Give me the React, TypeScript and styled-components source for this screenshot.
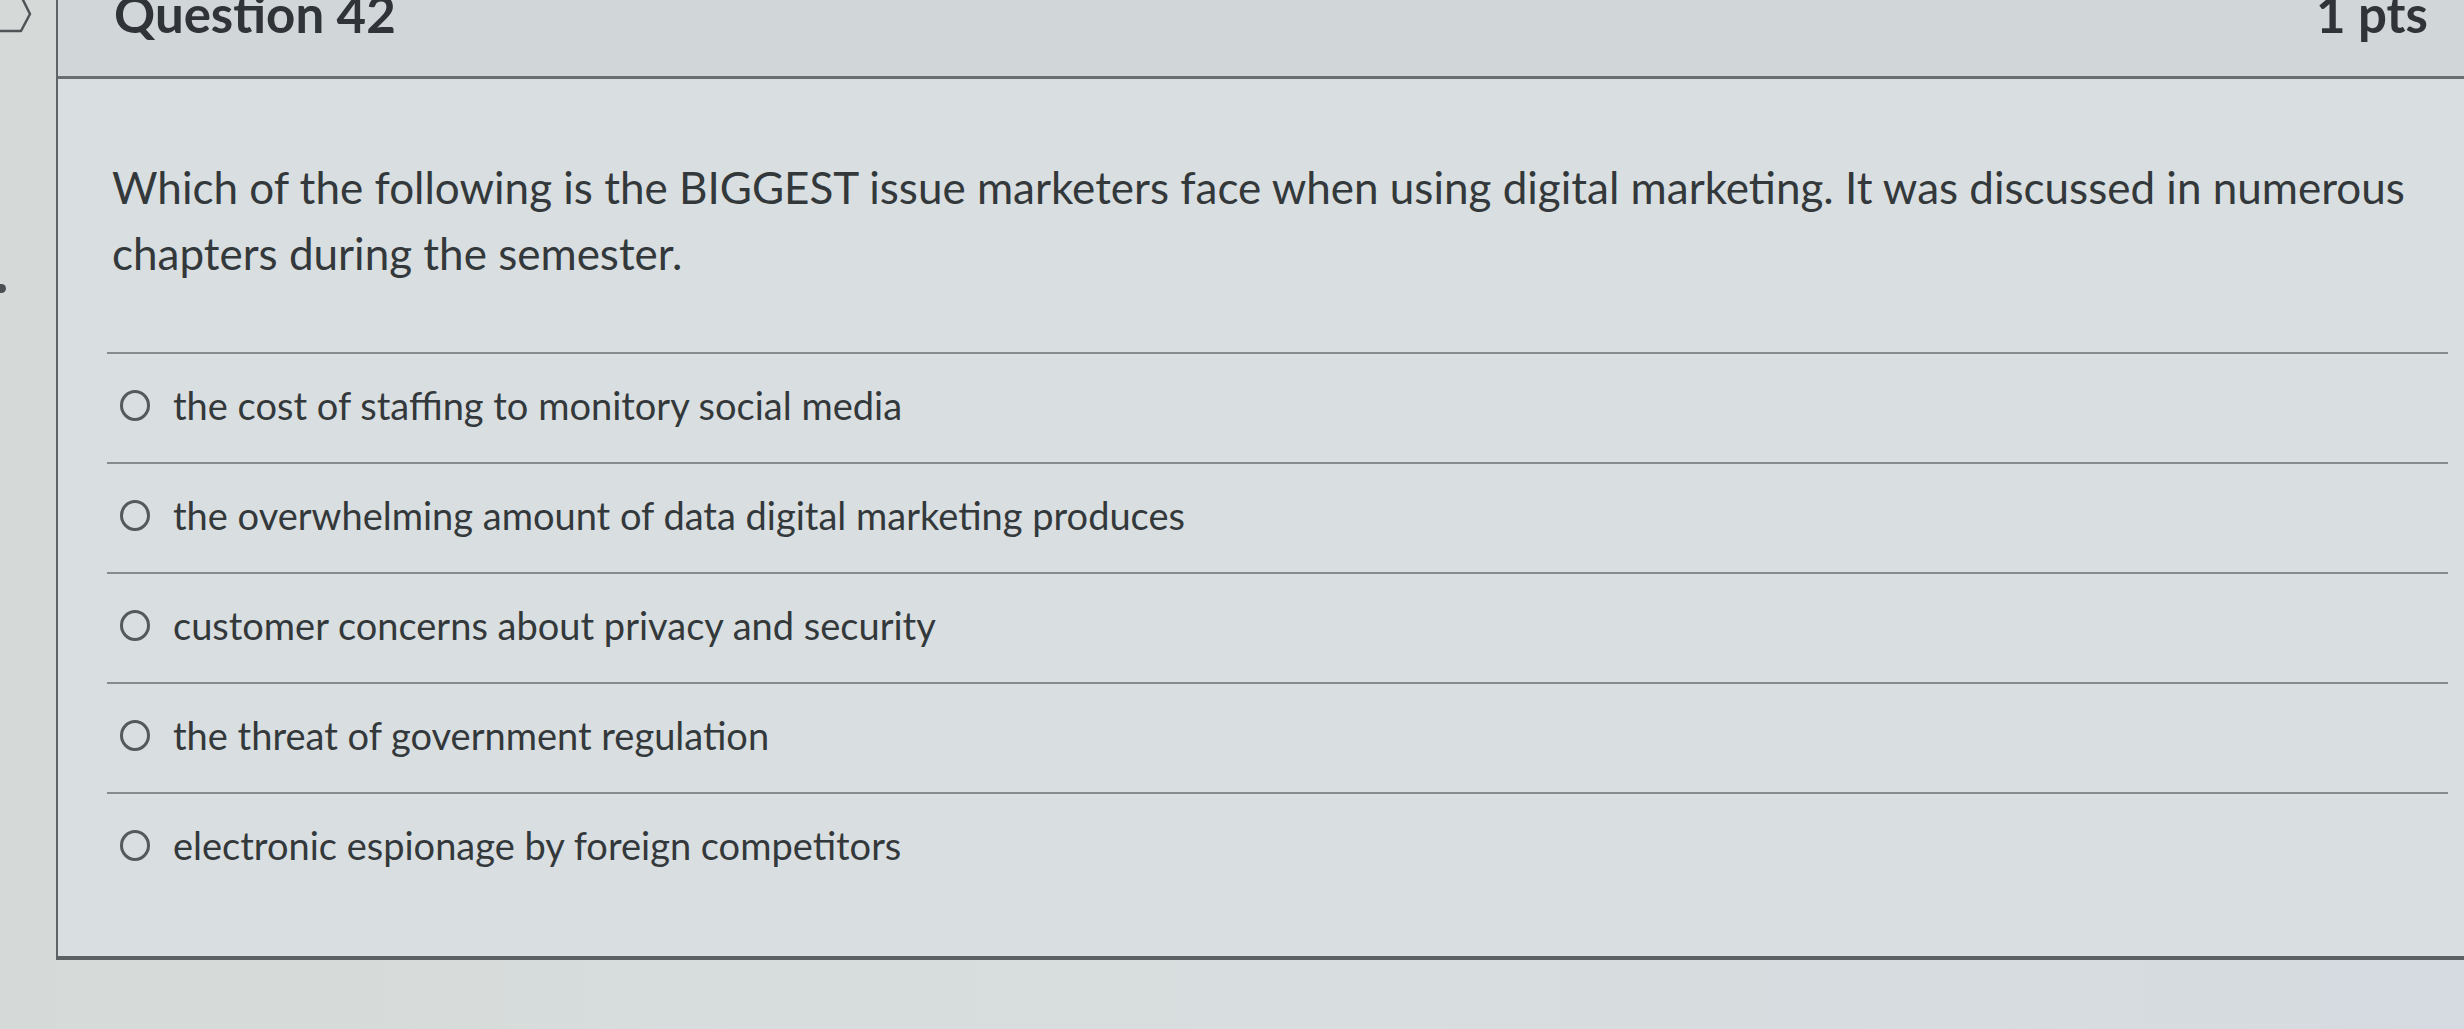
import React from "react";
import styled, { createGlobalStyle } from "styled-components";

const Global = createGlobalStyle`
  html, body {
    margin: 0;
    padding: 0;
    width: 2464px;
    height: 1029px;
    overflow: hidden;
    background: linear-gradient(90deg, #d6dbd9 0%, #d8dddf 55%, #d5dbe0 100%);
    font-family: Lato, "Open Sans", "Liberation Sans", sans-serif;
    color: #32373a;
  }
  #root { height: 1029px; }
`;

const Page = styled.div`
  display: flex;
  height: 1029px;
`;

const LeftStrip = styled.div`
  width: 56px;
  flex: none;
  display: flex;
  flex-direction: column;
  align-items: flex-start;
  background: #d5d9d7;
`;

const Dot = styled.span`
  width: 6px;
  height: 9px;
  margin-top: 250px;
  border-radius: 0 5px 5px 0;
  background: #4a4f52;
`;

const Panel = styled.section`
  flex: 1;
  align-self: flex-start;
  height: 960px;
  display: flex;
  flex-direction: column;
  border-left: 2px solid #5e6366;
  border-bottom: 4px solid #5c6164;
  box-sizing: border-box;
`;

const Header = styled.header`
  height: 79px;
  flex: none;
  box-sizing: border-box;
  display: flex;
  justify-content: space-between;
  align-items: flex-start;
  padding: 0 36px 0 56px;
  background: #d1d6d8;
  border-bottom: 3px solid #6a6e71;
  overflow: hidden;
`;

const HeaderText = styled.h2`
  margin: -12px 0 0 0;
  font-size: 51px;
  line-height: 51px;
  font-weight: 700;
  color: #303438;
`;

const Body = styled.div`
  flex: 1;
  padding: 75px 16px 0 54px;
  background: #d9dee0;
`;

const QuestionText = styled.p`
  margin: 0;
  font-size: 44px;
  line-height: 66px;
  font-weight: 400;
  color: #33383b;
`;

const Answers = styled.div`
  margin-top: 66px;
  margin-left: -5px;
  display: flex;
  flex-direction: column;
`;

const AnswerRow = styled.label`
  height: 110px;
  box-sizing: border-box;
  border-top: 2px solid #868b8e;
  display: flex;
  align-items: center;
  gap: 23px;
  padding: 0 0 6px 13px;
  font-size: 38px;
  color: #33383b;
`;

const Radio = styled.span`
  width: 24px;
  height: 25px;
  flex: none;
  border: 3.5px solid #55595c;
  border-radius: 50%;
`;

const answers = [
  "the cost of staffing to monitory social media",
  "the overwhelming amount of data digital marketing produces",
  "customer concerns about privacy and security",
  "the threat of government regulation",
  "electronic espionage by foreign competitors",
];

export default function App() {
  return (
    <>
      <Global />
      <Page>
        <LeftStrip>
          <svg width="34" height="34" viewBox="0 0 34 34">
            <path
              d="M0 31 L21 31 L30 14 L22 -2"
              fill="none"
              stroke="#4f5457"
              strokeWidth="2.5"
              strokeLinejoin="round"
            />
          </svg>
          <Dot />
        </LeftStrip>
        <Panel>
          <Header>
            <HeaderText>Question 42</HeaderText>
            <HeaderText>1 pts</HeaderText>
          </Header>
          <Body>
            <QuestionText>
              Which of the following is the BIGGEST issue marketers face when using digital
              marketing. It was discussed in numerous chapters during the semester.
            </QuestionText>
            <Answers>
              {answers.map((a) => (
                <AnswerRow key={a}>
                  <Radio />
                  {a}
                </AnswerRow>
              ))}
            </Answers>
          </Body>
        </Panel>
      </Page>
    </>
  );
}
